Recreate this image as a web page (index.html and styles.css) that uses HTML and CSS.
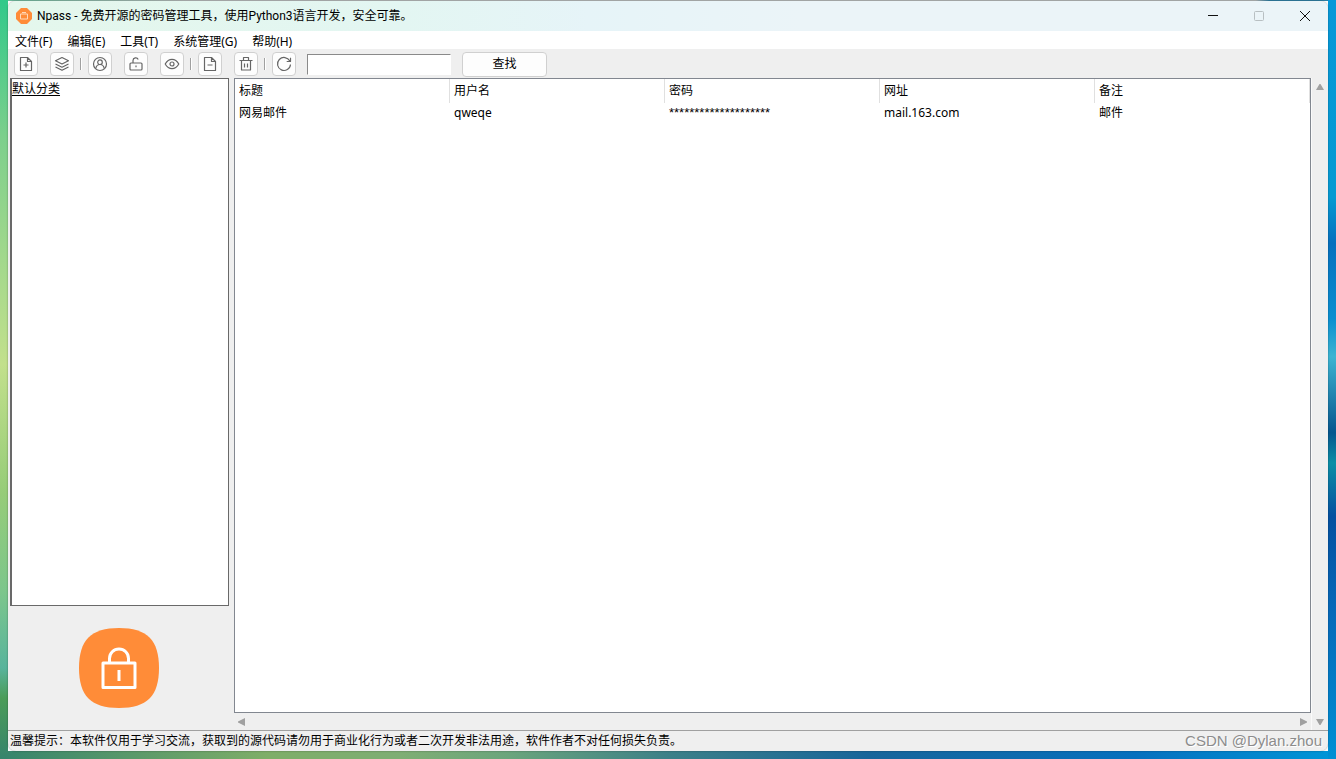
FILE: index.html
```html
<!DOCTYPE html>
<html lang="zh-CN">
<head>
  <meta charset="UTF-8">
  <title>Npass</title>
  <link rel="stylesheet" href="styles.css">
</head>
<body>
  <div class="window">
    <header class="titlebar">
      <svg class="app-icon" viewBox="0 0 16 16">
        <path d="M5 0h6l5 5v6l-5 5H5l-5-5V5z" fill="#ff8c38"/>
        <path d="M4.500 6h7v5h-7zM6 4.500h4" fill="none" stroke="#ffd9b8"/>
      </svg>
      <h1 class="title">Npass - 免费开源的密码管理工具，使用Python3语言开发，安全可靠。</h1>
      <div class="window-controls">
        <button class="control" aria-label="最小化">
          <svg viewBox="0 0 12 12"><path d="M1 5.500h10"/></svg>
        </button>
        <button class="control" aria-label="最大化" disabled>
          <svg viewBox="0 0 12 12"><rect x="1.500" y="1.500" width="9" height="9" rx="1"/></svg>
        </button>
        <button class="control" aria-label="关闭">
          <svg viewBox="0 0 12 12"><path d="M1 1l10 10M11 1L1 11"/></svg>
        </button>
      </div>
    </header>

    <nav class="menubar">
      <button class="menu">文件(F)</button>
      <button class="menu">编辑(E)</button>
      <button class="menu">工具(T)</button>
      <button class="menu">系统管理(G)</button>
      <button class="menu">帮助(H)</button>
    </nav>

    <div class="toolbar">
      <div class="group">
        <button class="tool" aria-label="新建">
          <svg viewBox="0 0 16 16"><path d="M2.500 1.500h7L13.500 5.500v9h-11zM9.500 1.500v4h4M8 6.500v5M5.500 9h5"/></svg>
        </button>
        <button class="tool" aria-label="分类">
          <svg viewBox="0 0 16 16"><path d="M8 1.500l6.500 3.200L8 8 1.500 4.700zM1.500 8L8 11.200 14.500 8M1.500 11L8 14.200 14.500 11"/></svg>
        </button>
      </div>
      <span class="separator"></span>
      <div class="group">
        <button class="tool" aria-label="用户">
          <svg viewBox="0 0 16 16"><circle cx="8" cy="8" r="6.500"/><circle cx="8" cy="6.200" r="2.300"/><path d="M3.800 12.500c.4-2.600 2-4 4.200-4s3.800 1.400 4.200 4"/></svg>
        </button>
        <button class="tool" aria-label="解锁">
          <svg viewBox="0 0 16 16"><rect x="2" y="7" width="12" height="7" rx="1"/><path d="M5 7V4.500a2.700 2.700 0 0 1 5.200-1M8 9.500v1.800"/></svg>
        </button>
        <button class="tool" aria-label="查看">
          <svg viewBox="0 0 16 16"><path d="M1.200 8C3 4.800 5.300 3.300 8 3.300S13 4.800 14.800 8C13 11.200 10.700 12.700 8 12.700S3 11.200 1.200 8z"/><circle cx="8" cy="8" r="2"/></svg>
        </button>
      </div>
      <span class="separator"></span>
      <div class="group">
        <button class="tool" aria-label="移除">
          <svg viewBox="0 0 16 16"><path d="M2.500 1.500h7L13.500 5.500v9h-11zM9.500 1.500v4h4M5.500 9h5"/></svg>
        </button>
        <button class="tool" aria-label="删除">
          <svg viewBox="0 0 16 16"><path d="M1.500 4.500h13M5.500 4.500v-3h5v3M3.500 4.500v9.500h9V4.500M6.500 7.500v4M9.500 7.500v4"/></svg>
        </button>
      </div>
      <span class="separator"></span>
      <button class="tool" aria-label="刷新">
        <svg viewBox="0 0 16 16"><path d="M13.800 5A6.500 6.500 0 1 0 14.500 8.500M14.500 1.800v3.700h-3.800"/></svg>
      </button>
      <form class="search">
        <input class="search-box" type="text" aria-label="查找内容">
        <button class="search-button" type="button">查找</button>
      </form>
    </div>

    <main class="content">
      <aside class="sidebar">
        <ul class="categories" role="listbox" aria-label="分类">
          <li class="category" role="option" aria-selected="false">默认分类</li>
        </ul>
        <div class="brand">
          <svg class="logo" viewBox="0 0 80 80">
            <path d="M40 0C68 0 80 12 80 40S68 80 40 80 0 68 0 40 12 0 40 0z" fill="#ff8c38"/>
            <path d="M24 35h32v24.500H24zM30.500 35v-4.500a9.500 9.500 0 0 1 19 0V35" fill="none" stroke="#fff" stroke-width="3" stroke-linejoin="round"/>
            <path d="M40 42v11" stroke="#fff" stroke-width="3"/>
          </svg>
        </div>
      </aside>

      <section class="records">
        <div class="table-frame">
          <table class="table">
            <thead>
              <tr><th>标题</th><th>用户名</th><th>密码</th><th>网址</th><th>备注</th></tr>
            </thead>
            <tbody>
              <tr><td>网易邮件</td><td>qweqe</td><td class="masked">********************</td><td>mail.163.com</td><td>邮件</td></tr>
            </tbody>
          </table>
        </div>
        <div class="scrollbar horizontal">
          <button class="arrow" aria-label="向左"><svg viewBox="0 0 8 8"><path d="M7 0v8L0 4.500v-1z"/></svg></button>
          <button class="arrow" aria-label="向右"><svg viewBox="0 0 8 8"><path d="M1 0v8l7-3.500v-1z"/></svg></button>
        </div>
      </section>

      <div class="scrollbar vertical">
        <button class="arrow" aria-label="向上"><svg viewBox="0 0 8 8"><path d="M0 7h8L4.500 1h-1z"/></svg></button>
        <button class="arrow" aria-label="向下"><svg viewBox="0 0 8 8"><path d="M0 1h8L4.500 7h-1z"/></svg></button>
      </div>
    </main>

    <footer class="statusbar">
      <span>温馨提示：本软件仅用于学习交流，获取到的源代码请勿用于商业化行为或者二次开发非法用途，软件作者不对任何损失负责。</span>
      <span class="watermark">CSDN @Dylan.zhou</span>
    </footer>
  </div>
</body>
</html>
```
FILE: styles.css
```css
* {
  box-sizing: border-box;
}
body {
  margin: 0;
  height: 100vh;
  padding: 1px 8px 8px;
  display: flex;
  font-family: "Noto Sans", "Noto Sans CJK SC", sans-serif;
  font-size: 12px;
  line-height: 18px;
  color: #000;
  /* wallpaper: left edge, right edge, top edge, bottom edge */
  background:
    linear-gradient(#2fc98a, #7ccf8c 18%, #c2e08c 48%, #96cc78 65%, #7cc68c 78%, #58b49c 88%, #4b9c58 92%, #36846c) left / 8px 100% no-repeat,
    linear-gradient(#0798d8, #069ad2 26%, #0670be 32%, #0a8fd0 42%, #3cb4d2 47%, #05568e 57%, #0c8ea6 61%, #0450a0 68%, #0668b8 80%, #0090d4) right / 8px 100% no-repeat,
    linear-gradient(to right, #6bb89a, #b4b8b8 14%, #b4b8b8 94%, #2f7fa4 95%) top / 100% 1px no-repeat,
    linear-gradient(to right, #36846c, #7fae68 20%, #7fae74 30%, #6ba57c 38%, #3c8088 50%, #17659a 65%, #0670be 85%, #0096d8) bottom / 100% 8px no-repeat;
}
button,
input {
  font: inherit;
  color: inherit;
}
svg {
  display: block;
}
.window {
  flex: 1;
  display: flex;
  flex-direction: column;
  background: #efefef;
  border-radius: 8px;
  overflow: hidden;
  box-shadow: 0 0 2px rgba(0, 0, 0, 0.4);
}

.titlebar {
  height: 30px;
  display: flex;
  align-items: center;
  padding-left: 8px;
  background: linear-gradient(to right, #e4f7ec, #e3f6f2 30%, #e6f4f8 44%, #ebf4f8 60%);
}
.app-icon {
  width: 16px;
  height: 16px;
  margin-right: 5px;
}
.title {
  margin: 0;
  font-family: Roboto, "Noto Sans CJK SC", sans-serif;
  font-size: 12px;
  font-weight: normal;
}
.window-controls {
  margin-left: auto;
  display: flex;
}
.control {
  width: 46px;
  height: 28px;
  padding: 0 17px;
  border: none;
  background: none;
}
.control svg {
  width: 12px;
  height: 12px;
  fill: none;
  stroke: #111;
}
.control:disabled svg {
  stroke: #b8bfc2;
}

.menubar {
  height: 18px;
  display: flex;
  gap: 1px;
  background: #fff;
}
.menu {
  padding: 2px 7px 0;
  border: none;
  background: none;
}

.toolbar {
  height: 29px;
  display: flex;
  align-items: center;
  gap: 6px;
  padding: 1px 0 0 6px;
}
.group {
  display: flex;
  gap: 12px;
}
.tool {
  width: 24px;
  height: 24px;
  padding: 3px;
  border: 1px solid #d0d0d0;
  border-radius: 4px;
  background: #fdfdfd;
}
.tool svg {
  width: 16px;
  height: 16px;
  fill: none;
  stroke: #666;
  stroke-width: 1.2;
  stroke-linejoin: round;
}
.separator {
  width: 2px;
  height: 12px;
  border-left: 1px solid #a0a0a0;
  border-right: 1px solid #fff;
}
.search {
  display: flex;
  align-items: center;
  gap: 11px;
  margin-left: 5px;
}
.search-box {
  width: 144px;
  height: 21px;
  padding: 0 3px;
  border: 1px solid #fff;
  border-top-color: #8a8a8a;
  border-left-color: #8a8a8a;
  outline: none;
  background: #fff;
}
.search-button {
  width: 85px;
  height: 25px;
  border: 1px solid #d0d0d0;
  border-radius: 4px;
  background: #fdfdfd;
}

.content {
  flex: 1;
  display: flex;
  min-height: 0;
}
.sidebar {
  width: 219px;
  margin: 0 5px 0 2px;
  display: flex;
  flex-direction: column;
}
.categories {
  flex: 1;
  margin: 0;
  padding: 1px 0;
  list-style: none;
  background: #fff;
  border: 1px solid #696969;
  border-left-width: 2px;
}
.category {
  line-height: 18px;
  text-decoration: underline;
  text-underline-offset: 2px;
}
.brand {
  display: flex;
  justify-content: center;
  padding: 22px 1px 22px 0;
}
.logo {
  width: 80px;
  height: 80px;
}

.records {
  flex: 1;
  display: flex;
  flex-direction: column;
}
.table-frame {
  flex: 1;
  background: #fff;
  border: 1px solid #828790;
}
.table {
  width: 100%;
  table-layout: fixed;
  border-collapse: separate;
  border-spacing: 0;
}
.table th,
.table td {
  padding: 0 4px;
  font-weight: normal;
  text-align: left;
}
.table th {
  height: 24px;
  border-right: 1px solid #e0e0e0;
}
.table td {
  height: 20px;
}
.table .masked {
  font-family: "Liberation Sans", sans-serif;
  font-size: 13px;
}

.scrollbar {
  display: flex;
  justify-content: space-between;
}
.horizontal {
  height: 17px;
}
.vertical {
  width: 17px;
  flex-direction: column;
  border-left: 1px solid #fafafa;
}
.arrow {
  width: 16px;
  height: 17px;
  padding: 4px;
  border: none;
  background: none;
}
.arrow svg {
  width: 8px;
  height: 8px;
  fill: #a0a0a0;
}

.statusbar {
  position: relative;
  height: 21px;
  padding-left: 2px;
  border-top: 1px solid #a0a0a0;
  line-height: 20px;
}
.watermark {
  position: absolute;
  right: 6px;
  bottom: 0;
  font-family: "Liberation Sans", sans-serif;
  font-size: 15px;
  color: #8c8c8c;
  text-shadow: 1px 1px #fff;
}
```
